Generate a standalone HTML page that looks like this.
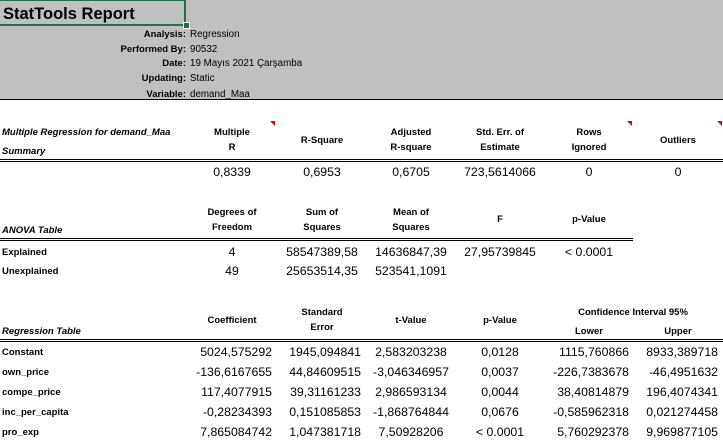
<!DOCTYPE html>
<html><head><meta charset="utf-8"><style>
body{margin:0;width:723px;height:446px;background:#fff;position:relative;overflow:hidden;font-family:"Liberation Sans",sans-serif;color:#000}
.t{position:absolute;white-space:nowrap;font-size:12.3px;line-height:14px}
.b{font-weight:bold;font-size:9.5px}
.i{font-style:italic;font-weight:bold;font-size:9.5px}
.c{transform:translateX(-50%)}
.r{transform:translateX(-100%)}
.dl{position:absolute;height:1px;border-top:1px solid #000;border-bottom:1px solid #000}
.tri{position:absolute;width:0;height:0;border-top:5px solid #e00;border-left:5px solid transparent}
.h{font-size:9.8px}
</style></head><body>
<div style="position:absolute;left:0;top:0;width:723px;height:99px;background:#c0c0c0;border-bottom:1px solid #000"></div>
<div style="position:absolute;left:0;top:0;width:184px;height:23px;border:2px solid #217346;border-left:none;border-top:1px solid #217346"></div>
<div style="position:absolute;left:183px;top:22px;width:5px;height:5px;background:#217346;border:1px solid #fff"></div>
<div class="t" style="left:3px;top:4px;font-size:16.5px;line-height:20px;font-weight:bold">StatTools Report</div>
<div class="t b r" style="left:186px;top:28px">Analysis:</div><div class="t h" style="left:190px;top:28px">Regression</div>
<div class="t b r" style="left:186px;top:43px">Performed By:</div><div class="t h" style="left:190px;top:43px">90532</div>
<div class="t b r" style="left:186px;top:57px">Date:</div><div class="t h" style="left:190px;top:57px">19 Mayıs 2021 Çarşamba</div>
<div class="t b r" style="left:186px;top:72px">Updating:</div><div class="t h" style="left:190px;top:72px">Static</div>
<div class="t b r" style="left:186px;top:88px">Variable:</div><div class="t h" style="left:190px;top:88px">demand_Maa</div>

<div class="tri" style="left:270px;top:121px"></div><div class="tri" style="left:627px;top:121px"></div><div class="tri" style="left:717px;top:121px"></div>
<div class="t i" style="left:2px;top:126px">Multiple Regression for demand_Maa</div>
<div class="t i" style="left:2px;top:145px">Summary</div>
<div class="t b c" style="left:232px;top:126px">Multiple</div><div class="t b c" style="left:232px;top:141px">R</div>
<div class="t b c" style="left:322px;top:134px">R-Square</div>
<div class="t b c" style="left:411px;top:126px">Adjusted</div><div class="t b c" style="left:411px;top:141px">R-square</div>
<div class="t b c" style="left:500px;top:126px">Std. Err. of</div><div class="t b c" style="left:500px;top:141px">Estimate</div>
<div class="t b c" style="left:589px;top:126px">Rows</div><div class="t b c" style="left:589px;top:141px">Ignored</div>
<div class="t b c" style="left:678px;top:134px">Outliers</div>
<div class="dl" style="left:0;top:159px;width:723px"></div>
<div class="t c" style="left:232px;top:165px">0,8339</div>
<div class="t c" style="left:322px;top:165px">0,6953</div>
<div class="t c" style="left:411px;top:165px">0,6705</div>
<div class="t c" style="left:500px;top:165px">723,5614066</div>
<div class="t c" style="left:589px;top:165px">0</div>
<div class="t c" style="left:678px;top:165px">0</div>

<div class="t b c" style="left:232px;top:206px">Degrees of</div><div class="t b c" style="left:232px;top:221px">Freedom</div>
<div class="t b c" style="left:322px;top:206px">Sum of</div><div class="t b c" style="left:322px;top:221px">Squares</div>
<div class="t b c" style="left:411px;top:206px">Mean of</div><div class="t b c" style="left:411px;top:221px">Squares</div>
<div class="t b c" style="left:500px;top:213px">F</div>
<div class="t b c" style="left:589px;top:213px">p-Value</div>
<div class="t i" style="left:2px;top:224px">ANOVA Table</div>
<div class="dl" style="left:0;top:238px;width:633px"></div>
<div class="t b" style="left:2px;top:246px">Explained</div>
<div class="t c" style="left:232px;top:245px">4</div>
<div class="t c" style="left:322px;top:245px">58547389,58</div>
<div class="t c" style="left:411px;top:245px">14636847,39</div>
<div class="t c" style="left:500px;top:245px">27,95739845</div>
<div class="t c" style="left:589px;top:245px">&lt; 0.0001</div>
<div class="t b" style="left:2px;top:265px">Unexplained</div>
<div class="t c" style="left:232px;top:264px">49</div>
<div class="t c" style="left:322px;top:264px">25653514,35</div>
<div class="t c" style="left:411px;top:264px">523541,1091</div>

<div class="t b c" style="left:232px;top:314px">Coefficient</div>
<div class="t b c" style="left:322px;top:306px">Standard</div><div class="t b c" style="left:322px;top:321px">Error</div>
<div class="t b c" style="left:411px;top:314px">t-Value</div>
<div class="t b c" style="left:500px;top:314px">p-Value</div>
<div class="t b c" style="left:633px;top:306px">Confidence Interval 95%</div>
<div class="t b c" style="left:589px;top:325px">Lower</div><div class="t b c" style="left:678px;top:325px">Upper</div>
<div class="t i" style="left:2px;top:325px">Regression Table</div>
<div class="dl" style="left:0;top:339px;width:723px"></div>

<div class="t b" style="left:2px;top:346px">Constant</div>
<div class="t b" style="left:2px;top:366px">own_price</div>
<div class="t b" style="left:2px;top:386px">compe_price</div>
<div class="t b" style="left:2px;top:406px">inc_per_capita</div>
<div class="t b" style="left:2px;top:426px">pro_exp</div>

<div class="t r" style="left:272px;top:345px">5024,575292</div>
<div class="t r" style="left:272px;top:365px">-136,6167655</div>
<div class="t r" style="left:272px;top:385px">117,4077915</div>
<div class="t r" style="left:272px;top:405px">-0,28234393</div>
<div class="t r" style="left:272px;top:425px">7,865084742</div>

<div class="t r" style="left:361px;top:345px">1945,094841</div>
<div class="t r" style="left:361px;top:365px">44,84609515</div>
<div class="t r" style="left:361px;top:385px">39,31161233</div>
<div class="t r" style="left:361px;top:405px">0,151085853</div>
<div class="t r" style="left:361px;top:425px">1,047381718</div>

<div class="t c" style="left:411px;top:345px">2,583203238</div>
<div class="t c" style="left:411px;top:365px">-3,046346957</div>
<div class="t c" style="left:411px;top:385px">2,986593134</div>
<div class="t c" style="left:411px;top:405px">-1,868764844</div>
<div class="t c" style="left:411px;top:425px">7,50928206</div>

<div class="t c" style="left:500px;top:345px">0,0128</div>
<div class="t c" style="left:500px;top:365px">0,0037</div>
<div class="t c" style="left:500px;top:385px">0,0044</div>
<div class="t c" style="left:500px;top:405px">0,0676</div>
<div class="t c" style="left:500px;top:425px">&lt; 0.0001</div>

<div class="t r" style="left:629px;top:345px">1115,760866</div>
<div class="t r" style="left:629px;top:365px">-226,7383678</div>
<div class="t r" style="left:629px;top:385px">38,40814879</div>
<div class="t r" style="left:629px;top:405px">-0,585962318</div>
<div class="t r" style="left:629px;top:425px">5,760292378</div>

<div class="t r" style="left:718px;top:345px">8933,389718</div>
<div class="t r" style="left:718px;top:365px">-46,4951632</div>
<div class="t r" style="left:718px;top:385px">196,4074341</div>
<div class="t r" style="left:718px;top:405px">0,021274458</div>
<div class="t r" style="left:718px;top:425px">9,969877105</div>
</body></html>
